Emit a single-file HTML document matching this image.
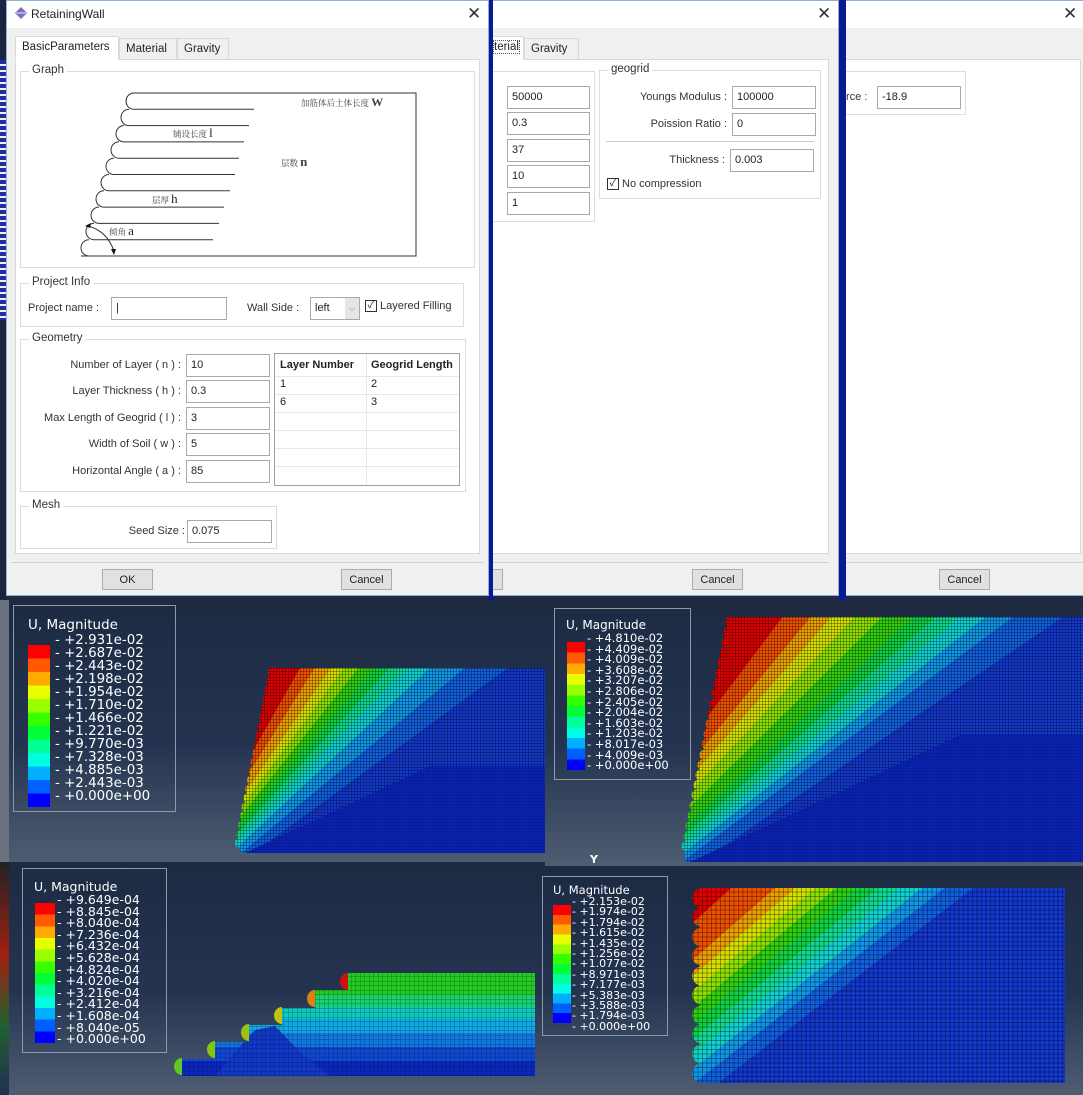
<!DOCTYPE html>
<html><head><meta charset="utf-8">
<style>
*{margin:0;padding:0;box-sizing:border-box}
body{width:1083px;height:1095px;position:relative;overflow:hidden;background:#1e2b42;font-family:"Liberation Sans","Noto Sans CJK SC",sans-serif;font-size:11px;color:#222}
.a{position:absolute}
.dlg{position:absolute;top:0;height:596px;background:#f0f0f0;border:1px solid #8fb0d0;overflow:hidden}
.tb{position:absolute;left:0;right:0;top:0;height:27px;background:#fff}
.x{position:absolute;top:3px;font-size:17px;color:#333;font-family:"DejaVu Sans",sans-serif}
.pane{position:absolute;top:58px;height:495px;background:#fff;border:1px solid #d9d9d9}
.grp{position:absolute;border:1px solid #dcdcdc}
.gl{position:absolute;top:-8px;left:8px;background:#fff;padding:0 3px;color:#333;font-size:11.5px}
.in{position:absolute;height:23px;border:1px solid #a9a9a9;background:#fff;padding:4px 0 0 4px;font-size:11px}
.lb{position:absolute;font-size:11px;color:#333;text-align:right;white-space:nowrap}
.btn{position:absolute;height:21px;border:1px solid #adadad;background:#e1e1e1;text-align:center;padding-top:4px;font-size:11px}
.tab{position:absolute;top:37px;height:21px;border:1px solid #d9d9d9;border-bottom:none;background:#f0f0f0;padding:4px 6px 0;font-size:11.5px}
.cb{position:absolute;width:12px;height:12px;border:1px solid #333;background:#fff;font-size:10px;line-height:10px;text-align:center}
.leg{position:absolute;border:1px solid #8d98a8}
.lt{position:absolute;color:#fff;font-family:"DejaVu Sans",sans-serif;white-space:pre}
.panel{position:absolute;background:linear-gradient(#1d2a42,#243450 55%,#4e5d72)}
.plot{position:absolute;left:0;top:0;width:1083px;height:1095px}
</style></head><body>

<div class="a" style="left:0;top:0;width:7px;height:600px;background:#1a2340"></div>
<div class="a" style="left:0;top:60px;width:6px;height:260px;background:repeating-linear-gradient(#2030a0 0 4px,#f0f0f0 4px 6px)"></div>
<div class="a" style="left:488px;top:0;width:6px;height:600px;background:#0a1a90"></div>
<div class="a" style="left:838px;top:0;width:8px;height:600px;background:#0a1a90"></div>

<!-- Dialog 1 -->
<div class="dlg" style="left:6px;width:483px">
 <div class="tb"></div>
 <svg class="a" style="left:7px;top:5px" width="14" height="14"><path d="M7 1 L13 7 L7 13 L1 7Z" fill="#7a6fc0"/><rect x="1" y="6" width="12" height="2" fill="#b0a8e0"/></svg>
 <div class="a" style="left:24px;top:6px;font-size:12px;color:#222">RetainingWall</div>
 <div class="x" style="left:460px">✕</div>
 <div class="tab" style="left:8px;width:104px;background:#fff;top:35px;height:24px;z-index:2;border-bottom:1px solid #fff">BasicParameters</div>
 <div class="tab" style="left:112px;width:58px">Material</div>
 <div class="tab" style="left:170px;width:52px">Gravity</div>
 <div class="pane" style="left:8px;width:465px"></div>
 <div class="grp" style="left:13px;top:70px;width:455px;height:197px"><div class="gl">Graph</div></div>
 <svg class="a" style="left:0;top:0" width="483" height="270">
  <g fill="none" stroke="#333" stroke-width="1">
   <path d="M125 92 H409 V255 H74"/>
   <path d="M127 92 A8 8.15 0 0 0 127 108.3 H247"/>
   <path d="M122 108.3 A8 8.15 0 0 0 122 124.6 H242"/>
   <path d="M117 124.6 A8 8.15 0 0 0 117 140.9 H237"/>
   <path d="M112 140.9 A8 8.15 0 0 0 112 157.2 H232"/>
   <path d="M107 157.2 A8 8.15 0 0 0 107 173.5 H228"/>
   <path d="M102 173.5 A8 8.15 0 0 0 102 189.8 H223"/>
   <path d="M97 189.8 A8 8.15 0 0 0 97 206.1 H217"/>
   <path d="M92 206.1 A8 8.15 0 0 0 92 222.4 H212"/>
   <path d="M87 222.4 A8 8.15 0 0 0 87 238.7 H206"/>
   <path d="M82 238.7 A8 8.15 0 0 0 82 255"/>
   <path d="M81 225 Q100 230 107 250"/>
  </g>
  <path d="M78 225 l6 -3 l-1 5z M107 254 l-3 -6 l5 0z" fill="#111"/>
  <g font-family="Liberation Serif,Noto Serif CJK SC,serif" fill="#444" font-size="8.5">
   <text x="294" y="105">加筋体后土体长度 <tspan font-size="12" font-weight="bold">W</tspan></text>
   <text x="166" y="136">铺设长度 <tspan font-size="13" fill="#222">l</tspan></text>
   <text x="274" y="165">层数 <tspan font-size="13" font-weight="bold">n</tspan></text>
   <text x="145" y="202">层厚 <tspan font-size="13" fill="#222">h</tspan></text>
   <text x="102" y="234">倾角 <tspan font-size="13" fill="#222">a</tspan></text>
  </g>
 </svg>
 <div class="grp" style="left:13px;top:282px;width:444px;height:44px"><div class="gl">Project Info</div></div>
 <div class="lb" style="left:21px;top:301px">Project name :</div>
 <div class="in" style="left:104px;top:296px;width:116px;height:23px">|</div>
 <div class="lb" style="left:240px;top:301px">Wall Side :</div>
 <div class="in" style="left:303px;top:296px;width:50px">left</div>
 <div class="a" style="left:338px;top:297px;width:14px;height:21px;background:#e5e5e5;color:#888;font-size:9px;text-align:center;padding-top:5px">⌵</div>
 <div class="cb" style="left:358px;top:299px">✓</div>
 <div class="lb" style="left:373px;top:299px">Layered Filling</div>

 <div class="grp" style="left:13px;top:338px;width:446px;height:153px"><div class="gl">Geometry</div></div>
 <div class="lb" style="right:307px;top:358px">Number of Layer ( n ) :</div>
 <div class="lb" style="right:307px;top:384px">Layer Thickness ( h ) :</div>
 <div class="lb" style="right:307px;top:411px">Max Length of Geogrid ( l ) :</div>
 <div class="lb" style="right:307px;top:437px">Width of Soil ( w ) :</div>
 <div class="lb" style="right:307px;top:464px">Horizontal Angle ( a ) :</div>
 <div class="in" style="left:179px;top:353px;width:84px">10</div>
 <div class="in" style="left:179px;top:379px;width:84px">0.3</div>
 <div class="in" style="left:179px;top:406px;width:84px">3</div>
 <div class="in" style="left:179px;top:432px;width:84px">5</div>
 <div class="in" style="left:179px;top:459px;width:84px">85</div>
 <div class="a" style="left:267px;top:352px;width:186px;height:133px;border:1px solid #a0a0a0;background:#fff">
  <div class="a" style="left:91px;top:0;width:1px;height:131px;background:#e8e8e8"></div>
  <div class="a" style="left:0;top:22px;width:184px;height:1px;background:#e8e8e8"></div>
  <div class="a" style="left:0;top:40px;width:184px;height:1px;background:#e8e8e8"></div>
  <div class="a" style="left:0;top:58px;width:184px;height:1px;background:#e8e8e8"></div>
  <div class="a" style="left:0;top:76px;width:184px;height:1px;background:#e8e8e8"></div>
  <div class="a" style="left:0;top:94px;width:184px;height:1px;background:#e8e8e8"></div>
  <div class="a" style="left:0;top:112px;width:184px;height:1px;background:#e8e8e8"></div>
  <div class="a" style="left:5px;top:5px;font-weight:bold;font-size:11px">Layer Number</div>
  <div class="a" style="left:96px;top:5px;font-weight:bold;font-size:11px;white-space:nowrap">Geogrid Length</div>
  <div class="a" style="left:5px;top:24px">1</div><div class="a" style="left:96px;top:24px">2</div>
  <div class="a" style="left:5px;top:42px">6</div><div class="a" style="left:96px;top:42px">3</div>
 </div>
 <div class="grp" style="left:13px;top:505px;width:257px;height:43px"><div class="gl">Mesh</div></div>
 <div class="lb" style="right:303px;top:524px">Seed Size :</div>
 <div class="in" style="left:180px;top:519px;width:85px">0.075</div>
 <div class="a" style="left:4px;top:561px;width:473px;height:1px;background:#d0d0d0"></div>
 <div class="btn" style="left:95px;top:568px;width:51px">OK</div>
 <div class="btn" style="left:334px;top:568px;width:51px">Cancel</div>
</div>

<!-- Dialog 2 -->
<div class="dlg" style="left:493px;width:346px;border-left:none">
 <div class="tb"></div>
 <div class="x" style="left:324px">✕</div>
 <div class="tab" style="left:-6px;width:37px;background:#fff;top:35px;height:24px;z-index:2;border-bottom:1px solid #fff"><span style="outline:1px dotted #555">terial</span></div>
 <div class="tab" style="left:31px;width:55px">Gravity</div>
 <div class="pane" style="left:-2px;width:338px"></div>
 <div class="grp" style="left:-2px;top:70px;width:104px;height:151px"></div>
 <div class="in" style="left:14px;top:85px;width:83px">50000</div>
 <div class="in" style="left:14px;top:111px;width:83px">0.3</div>
 <div class="in" style="left:14px;top:138px;width:83px">37</div>
 <div class="in" style="left:14px;top:164px;width:83px">10</div>
 <div class="in" style="left:14px;top:191px;width:83px">1</div>
 <div class="grp" style="left:106px;top:69px;width:222px;height:129px"><div class="gl">geogrid</div></div>
 <div class="lb" style="right:111px;top:90px">Youngs Modulus :</div>
 <div class="lb" style="right:111px;top:117px">Poission Ratio :</div>
 <div class="in" style="left:239px;top:85px;width:84px">100000</div>
 <div class="in" style="left:239px;top:112px;width:84px">0</div>
 <div class="a" style="left:113px;top:140px;width:208px;height:2px;border-top:1px solid #c8c8c8;border-bottom:1px solid #fff"></div>
 <div class="lb" style="right:113px;top:153px">Thickness :</div>
 <div class="in" style="left:237px;top:148px;width:84px">0.003</div>
 <div class="cb" style="left:114px;top:177px">✓</div>
 <div class="lb" style="left:129px;top:177px">No compression</div>
 <div class="a" style="left:0;top:561px;width:336px;height:1px;background:#d0d0d0"></div>
 <div class="btn" style="left:-20px;top:568px;width:30px"></div>
 <div class="btn" style="left:199px;top:568px;width:51px">Cancel</div>
</div>

<!-- Dialog 3 -->
<div class="dlg" style="left:846px;width:240px;border-left:none;border-right:none">
 <div class="tb"></div>
 <div class="x" style="left:217px">✕</div>
 <div class="pane" style="left:-2px;width:237px"></div>
 <div class="grp" style="left:-2px;top:70px;width:122px;height:44px"></div>
 <div class="lb" style="left:0;top:90px">rce :</div>
 <div class="in" style="left:31px;top:85px;width:84px">-18.9</div>
 <div class="a" style="left:0;top:561px;width:240px;height:1px;background:#d0d0d0"></div>
 <div class="btn" style="left:93px;top:568px;width:51px">Cancel</div>
</div>

<!-- panels backgrounds -->
<div class="panel" style="left:0;top:600px;width:545px;height:262px"></div>
<div class="a" style="left:0;top:600px;width:9px;height:262px;background:#6a7280"></div>
<div class="panel" style="left:545px;top:600px;width:538px;height:266px"></div>
<div class="panel" style="left:0;top:862px;width:535px;height:233px"></div>
<div class="a" style="left:0;top:862px;width:9px;height:233px;background:linear-gradient(#222,#a02010 40%,#206030 70%,#203050)"></div>
<div class="panel" style="left:535px;top:866px;width:548px;height:229px"></div>
<div class="lt" style="left:590px;top:853px;font-size:11px;font-weight:bold">Y</div>

<svg width="0" height="0" style="position:absolute">
 <defs>
  <clipPath id="c1" clipPathUnits="userSpaceOnUse">
   <path d="M275 668H545V853H240Z"/>
   <circle cx="273" cy="672" r="5"/><circle cx="271.2" cy="681" r="5"/><circle cx="269.5" cy="690" r="5"/><circle cx="267.7" cy="699" r="5"/><circle cx="266" cy="708" r="5"/><circle cx="264.2" cy="717" r="5"/><circle cx="262.5" cy="726" r="5"/><circle cx="260.7" cy="735" r="5"/><circle cx="259" cy="744" r="5"/><circle cx="257.2" cy="753" r="5"/><circle cx="255.5" cy="762" r="5"/><circle cx="253.7" cy="771" r="5"/><circle cx="252" cy="780" r="5"/><circle cx="250.2" cy="789" r="5"/><circle cx="248.5" cy="798" r="5"/><circle cx="246.7" cy="807" r="5"/><circle cx="245" cy="816" r="5"/><circle cx="243.2" cy="825" r="5"/><circle cx="241.5" cy="834" r="5"/><circle cx="239.7" cy="843" r="5"/><circle cx="244" cy="849" r="4"/>
  </clipPath>
  <clipPath id="c2" clipPathUnits="userSpaceOnUse">
   <path d="M733 617H1083V862H685Z"/>
   <circle cx="731" cy="622" r="5.5"/><circle cx="729" cy="632" r="5.5"/><circle cx="727" cy="642" r="5.5"/><circle cx="725" cy="653" r="5.5"/><circle cx="723" cy="663" r="5.5"/><circle cx="721" cy="673" r="5.5"/><circle cx="719" cy="683" r="5.5"/><circle cx="717" cy="693" r="5.5"/><circle cx="715" cy="704" r="5.5"/><circle cx="713" cy="714" r="5.5"/><circle cx="711" cy="724" r="5.5"/><circle cx="709" cy="734" r="5.5"/><circle cx="707" cy="744" r="5.5"/><circle cx="705" cy="755" r="5.5"/><circle cx="703" cy="765" r="5.5"/><circle cx="701" cy="775" r="5.5"/><circle cx="699" cy="785" r="5.5"/><circle cx="697" cy="795" r="5.5"/><circle cx="695" cy="806" r="5.5"/><circle cx="693" cy="816" r="5.5"/><circle cx="691" cy="826" r="5.5"/><circle cx="689" cy="836" r="5.5"/><circle cx="687" cy="846" r="5.5"/><circle cx="689" cy="856" r="5.5"/>
  </clipPath>
  <clipPath id="c3" clipPathUnits="userSpaceOnUse">
   <path d="M700 888H1065V1083H700Z"/>
   <circle cx="702" cy="898" r="9.7"/><circle cx="702" cy="917" r="9.7"/><circle cx="702" cy="937" r="9.7"/><circle cx="702" cy="956" r="9.7"/><circle cx="702" cy="976" r="9.7"/><circle cx="702" cy="995" r="9.7"/><circle cx="702" cy="1015" r="9.7"/><circle cx="702" cy="1034" r="9.7"/><circle cx="702" cy="1054" r="9.7"/><circle cx="702" cy="1073" r="9.7"/>
  </clipPath>
 </defs>
</svg>

<div class="plot" style="clip-path:url(#c1);background:repeating-linear-gradient(90deg,rgba(0,0,0,.3) 0 1px,transparent 1px 3px),repeating-linear-gradient(0deg,rgba(0,0,0,.3) 0 1px,transparent 1px 3px),conic-gradient(from 0deg at 154px 925px,#e00000 0deg 29.6deg,#ee5000 29.6deg 32deg,#eea000 32deg 34.5deg,#d6e000 34.5deg 36.5deg,#8ee000 36.5deg 38.5deg,#30d010 38.5deg 40.5deg,#10d040 40.5deg 42.5deg,#10d890 42.5deg 44.5deg,#10d0d0 44.5deg 47deg,#1098e8 47deg 50.4deg,#1060e0 50.4deg 54deg,#1238d0 54deg 360deg)"></div>
<div class="plot" style="clip-path:url(#c2);background:repeating-linear-gradient(90deg,rgba(0,0,0,.3) 0 1px,transparent 1px 3px),repeating-linear-gradient(0deg,rgba(0,0,0,.3) 0 1px,transparent 1px 3px),conic-gradient(from 0deg at 494px 1001px,#e00000 0deg 36.9deg,#ee5000 36.9deg 39.5deg,#eea000 39.5deg 41.3deg,#d6e000 41.3deg 43.2deg,#8ee000 43.2deg 45.3deg,#30d010 45.3deg 47.5deg,#10d040 47.5deg 49deg,#10d890 49deg 50.5deg,#10d0d0 50.5deg 52deg,#1098e8 52deg 53.5deg,#1060e0 53.5deg 56deg,#1238d0 56deg 360deg)"></div>
<div class="plot" style="clip-path:url(#c3);background:repeating-linear-gradient(90deg,rgba(0,0,0,.35) 0 1px,transparent 1px 4.5px),repeating-linear-gradient(0deg,rgba(0,0,0,.35) 0 1px,transparent 1px 4.5px),conic-gradient(from 0deg at -634px 2117px,#e00000 0deg 48deg,#ee5000 48deg 48.9deg,#eea000 48.9deg 49.3deg,#d6e000 49.3deg 49.7deg,#8ee000 49.7deg 50.1deg,#30d010 50.1deg 50.5deg,#10d040 50.5deg 50.9deg,#10d890 50.9deg 51.3deg,#10d0d0 51.3deg 51.7deg,#1098e8 51.7deg 52.1deg,#1060e0 52.1deg 52.6deg,#1238d0 52.6deg 360deg)"></div>

<svg class="a" style="left:0;top:0" width="1083" height="1095">
 <defs>
  <pattern id="m" width="3" height="3" patternUnits="userSpaceOnUse"><path d="M0 0H3M0 0V3" stroke="#000" stroke-opacity=".3" stroke-width=".8" fill="none"/></pattern>
  <pattern id="m4" width="4.5" height="4.5" patternUnits="userSpaceOnUse"><path d="M0 0H4.5M0 0V4.5" stroke="#000" stroke-opacity=".4" stroke-width=".9" fill="none"/></pattern>
  <clipPath id="c4"><path d="M348 973H535V1076H182V1059H215V1042H249V1025H282V1008H315V990H348Z"/></clipPath>
 </defs>
 <path d="M245 853 L430 766 H545 V853Z" fill="#0a22b0"/>
 <path d="M245 853 L430 766 H545 V853Z" fill="url(#m)"/>
 <path d="M690 862 L962 734 H1083 V862Z" fill="#0a22b0"/>
 <path d="M690 862 L962 734 H1083 V862Z" fill="url(#m)"/>

 <g clip-path="url(#c4)">
  <rect x="180" y="973" width="360" height="22" fill="#22cc22"/>
  <rect x="180" y="995" width="360" height="12" fill="#18d070"/>
  <rect x="180" y="1007" width="360" height="12" fill="#10c8c0"/>
  <rect x="180" y="1019" width="360" height="14" fill="#10a8e0"/>
  <rect x="180" y="1033" width="360" height="14" fill="#1078e0"/>
  <rect x="180" y="1047" width="360" height="14" fill="#1048d0"/>
  <rect x="180" y="1061" width="360" height="15" fill="#0a28c0"/>
  <path d="M215 1076 L235 1052 L255 1030 L275 1026 L300 1052 L330 1076Z" fill="#1038c8"/>
  <rect x="180" y="973" width="360" height="103" fill="url(#m4)"/>
 </g>
 <g>
  <path d="M348 973 A8 8.5 0 0 0 348 990Z" fill="#d01010"/>
  <path d="M315 990 A8 8.5 0 0 0 315 1007Z" fill="#e08010"/>
  <path d="M282 1007 A8 8.5 0 0 0 282 1024Z" fill="#c0c010"/>
  <path d="M249 1024 A8 8.5 0 0 0 249 1041Z" fill="#a0c010"/>
  <path d="M215 1041 A8 8.5 0 0 0 215 1058Z" fill="#80c810"/>
  <path d="M182 1058 A8 8.5 0 0 0 182 1075Z" fill="#60c820"/>
 </g>
</svg>

<div class="leg" style="left:13px;top:605px;width:163px;height:207px"></div>
<div class="lt" style="left:28px;top:617px;font-size:13.5px">U, Magnitude</div>
<div class="a" style="left:28px;top:645px;width:22px;height:162px;background:linear-gradient(#ff0000 0 8.33%,#ff5a00 8.33% 16.67%,#ffaa00 16.67% 25%,#e8ff00 25% 33.33%,#9aff00 33.33% 41.67%,#36ff00 41.67% 50%,#00ff36 50% 58.33%,#00ff96 58.33% 66.67%,#00ffe0 66.67% 75%,#00b0ff 75% 83.33%,#0060ff 83.33% 91.67%,#0000ff 91.67%)"></div>
<div class="lt" style="left:55px;top:634px;font-size:13.4px;line-height:13px">- +2.931e-02
- +2.687e-02
- +2.443e-02
- +2.198e-02
- +1.954e-02
- +1.710e-02
- +1.466e-02
- +1.221e-02
- +9.770e-03
- +7.328e-03
- +4.885e-03
- +2.443e-03
- +0.000e+00</div>

<div class="leg" style="left:554px;top:608px;width:137px;height:172px"></div>
<div class="lt" style="left:566px;top:618px;font-size:12px">U, Magnitude</div>
<div class="a" style="left:567px;top:642px;width:18px;height:128px;background:linear-gradient(#ff0000 0 8.33%,#ff5a00 8.33% 16.67%,#ffaa00 16.67% 25%,#e8ff00 25% 33.33%,#9aff00 33.33% 41.67%,#36ff00 41.67% 50%,#00ff36 50% 58.33%,#00ff96 58.33% 66.67%,#00ffe0 66.67% 75%,#00b0ff 75% 83.33%,#0060ff 83.33% 91.67%,#0000ff 91.67%)"></div>
<div class="lt" style="left:587px;top:633px;font-size:11.5px;line-height:10.6px">- +4.810e-02
- +4.409e-02
- +4.009e-02
- +3.608e-02
- +3.207e-02
- +2.806e-02
- +2.405e-02
- +2.004e-02
- +1.603e-02
- +1.203e-02
- +8.017e-03
- +4.009e-03
- +0.000e+00</div>

<div class="leg" style="left:22px;top:868px;width:145px;height:185px"></div>
<div class="lt" style="left:34px;top:879px;font-size:12.5px">U, Magnitude</div>
<div class="a" style="left:35px;top:903px;width:20px;height:140px;background:linear-gradient(#ff0000 0 8.33%,#ff5a00 8.33% 16.67%,#ffaa00 16.67% 25%,#e8ff00 25% 33.33%,#9aff00 33.33% 41.67%,#36ff00 41.67% 50%,#00ff36 50% 58.33%,#00ff96 58.33% 66.67%,#00ffe0 66.67% 75%,#00b0ff 75% 83.33%,#0060ff 83.33% 91.67%,#0000ff 91.67%)"></div>
<div class="lt" style="left:57px;top:894px;font-size:12.5px;line-height:11.6px">- +9.649e-04
- +8.845e-04
- +8.040e-04
- +7.236e-04
- +6.432e-04
- +5.628e-04
- +4.824e-04
- +4.020e-04
- +3.216e-04
- +2.412e-04
- +1.608e-04
- +8.040e-05
- +0.000e+00</div>

<div class="leg" style="left:542px;top:876px;width:126px;height:160px"></div>
<div class="lt" style="left:553px;top:883px;font-size:11.5px">U, Magnitude</div>
<div class="a" style="left:553px;top:905px;width:18px;height:118px;background:linear-gradient(#ff0000 0 8.33%,#ff5a00 8.33% 16.67%,#ffaa00 16.67% 25%,#e8ff00 25% 33.33%,#9aff00 33.33% 41.67%,#36ff00 41.67% 50%,#00ff36 50% 58.33%,#00ff96 58.33% 66.67%,#00ffe0 66.67% 75%,#00b0ff 75% 83.33%,#0060ff 83.33% 91.67%,#0000ff 91.67%)"></div>
<div class="lt" style="left:572px;top:897px;font-size:11px;line-height:10.4px">- +2.153e-02
- +1.974e-02
- +1.794e-02
- +1.615e-02
- +1.435e-02
- +1.256e-02
- +1.077e-02
- +8.971e-03
- +7.177e-03
- +5.383e-03
- +3.588e-03
- +1.794e-03
- +0.000e+00</div>

</body></html>
